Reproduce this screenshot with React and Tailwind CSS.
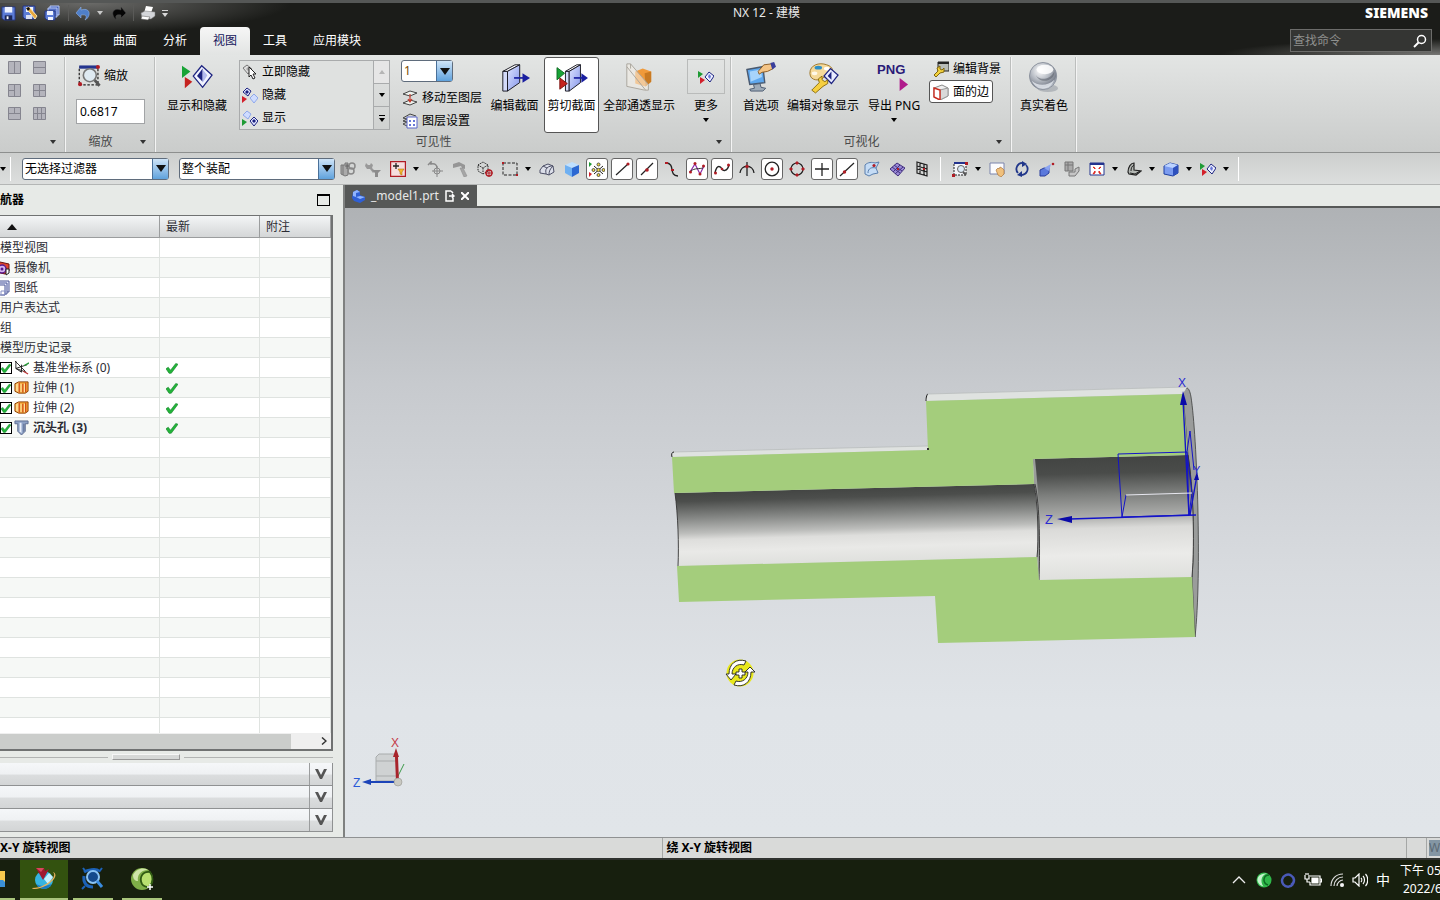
import { useState } from 'react';
import clsx from 'clsx';

const tabs = ['主页', '曲线', '曲面', '分析', '视图', '工具', '应用模块'];

const treeRows = [
  { id: 1, name: '模型视图' },
  { id: 2, name: '摄像机', icon: 'camera' },
  { id: 3, name: '图纸', icon: 'sheets' },
  { id: 4, name: '用户表达式' },
  { id: 5, name: '组' },
  { id: 6, name: '模型历史记录' },
  { id: 7, name: '基准坐标系 (0)', icon: 'csys', check: true },
  { id: 8, name: '拉伸 (1)', icon: 'extrude', check: true },
  { id: 9, name: '拉伸 (2)', icon: 'extrude', check: true },
  { id: 10, name: '沉头孔 (3)', icon: 'hole', check: true, bold: true },
];

const EMPTY_ROWS = 15;

const selectionTools = [
  { id: 'assembly', label: '装配范围' },
  { id: 'filterReset', label: '重置过滤器' },
  { id: 'snapFilter', label: '常规选择', menu: true },
  { id: 'undoSelect', label: '取消选择' },
  { id: 'hammer', label: '优先级' },
  { id: 'dottedCube', label: '取消全选' },
  { id: 'marquee', label: '矩形选择', menu: true },
  { id: 'wireBody', label: '高亮显示' },
  { id: 'blueCube', label: '允许选择隐藏线框' },
  { id: 'snapAll', label: '启用捕捉点', on: true },
  { id: 'endPoint', label: '端点', on: true },
  { id: 'midPoint', label: '中点', on: true },
  { id: 'controlPoint', label: '控制点' },
  { id: 'polePoint', label: '极点', on: true },
  { id: 'splinePoint', label: '定义点', on: true },
  { id: 'crossPoint', label: '交点' },
  { id: 'centerPoint', label: '圆弧中心', on: true },
  { id: 'quadrant', label: '象限点' },
  { id: 'plus', label: '现有点', on: true },
  { id: 'onCurve', label: '曲线上的点', on: true },
  { id: 'onFace', label: '面上的点' },
  { id: 'netFace', label: '小平面顶点' },
  { id: 'grid', label: '有界栅格' },
];

const viewTools = [
  { id: 'zoomFit', label: '缩放窗口', menu: true },
  { id: 'pan', label: '平移' },
  { id: 'rotate', label: '旋转' },
  { id: 'perspective', label: '透视' },
  { id: 'restore', label: '恢复' },
  { id: 'layout', label: '布局', menu: true },
  { id: 'orient', label: '定向视图', menu: true },
  { id: 'shaded', label: '着色', menu: true },
  { id: 'showHide', label: '显示和隐藏', menu: true },
];

const RED = '#b01c24';
const NAVY = '#1d2380';

// 16 x 16 drawings
const smallIcons = {
  save: (
    <>
      <path d="M1 1h14v14H3l-2-2z" fill="#5c7cd6" stroke="#26357c" />
      <path d="M4 1h8v6H4z" fill="#eef3ff" />
      <path d="M4 10h8v5H4z" fill="#1c2757" />
      <path d="M6 11h2v3H6z" fill="#fff" />
    </>
  ),
  saveAs: (
    <>
      <path d="M1 1h12v13H3l-2-2z" fill="#5c7cd6" stroke="#26357c" />
      <path d="M4 2h7v5H4z" fill="#eef3ff" />
      <path d="M4 10h6v4H4z" fill="#d9e0f5" />
      <path d="M4 3l3-1 8 9-2 3z" fill="#e7a73c" stroke="#fbe6b2" />
      <path d="M4 3l3-1 1 2-2 2z" fill="#111" />
    </>
  ),
  saveAll: (
    <>
      <path d="M6 1h9v9H6z" fill="#4663b8" stroke="#b9c9f6" />
      <path d="M4 3h9v9H4z" fill="#5672c8" stroke="#b9c9f6" />
      <path d="M1 6h10v9H3l-2-2z" fill="#5c7cd6" stroke="#26357c" />
      <path d="M3 6h6v4H3zM4 12h5v3H4z" fill="#eef3ff" />
    </>
  ),
  undo: (
    <path d="M1 8l5-6v3c6-2 9 1 8 5-.5 2-2 4-4 5 2-3 2-6-4-5v3z" fill="#4f7fc9" stroke="#9cbcec" strokeWidth=".5" />
  ),
  redo: (
    <path d="M15 8l-5-6v3C4 3 1 6 2 10c.5 2 2 4 4 5-2-3-2-6 4-5v3z" fill="#050505" stroke="#4a4a4a" strokeWidth=".5" />
  ),
  print: (
    <>
      <path d="M6 1l7 1-2 6H4z" fill="#fff" />
      <path d="M1 8l4-2 10 1v4l-4 3-9-1z" fill="#d4d6da" stroke="#777" strokeWidth=".5" />
      <path d="M2 11l8 1-2 3-7-1z" fill="#fff" stroke="#555" strokeWidth=".5" />
    </>
  ),
  camera: (
    <>
      <path d="M1 6l5-4 9 2v7l-4 3-9-2z" fill="#e2452c" stroke="#6b1410" />
      <circle cx="8" cy="9" r="4" fill="#d6b6ee" stroke="#5b1c8f" strokeWidth="1.5" />
      <circle cx="8" cy="9" r="1.5" fill="#5b1c8f" />
      <path d="M12 9h3v4l-3 2z" fill="#fff" stroke="#222" />
    </>
  ),
  sheets: (
    <>
      <path d="M4 1h11v11H4z" fill="#e9ecff" stroke="#4b5694" />
      <path d="M2 3h11v11H2z" fill="#e9ecff" stroke="#4b5694" />
      <path d="M0 5h11v10H0z" fill="#fff" stroke="#4b5694" />
      <path d="M7 11h4v4H7z" fill="none" stroke="#8790c4" />
    </>
  ),
  csys: (
    <>
      <path d="M2 1v8l11 4M2 9l12-4M1 1l11 11M2 9l6 4V5" fill="none" stroke="#222" />
      <path d="M10 12l5 3" stroke="#b33" strokeWidth="1.2" />
      <path d="M11 6l5-3" stroke="#2a9a3a" strokeWidth="1.5" />
    </>
  ),
  extrude: (
    <>
      <path d="M1 4l4-2 10 0 0 10-3 2H5l-4-2z" fill="#f7a836" stroke="#8a3c00" strokeLinejoin="round" />
      <path d="M2 4.500l3-1.500v10l-3-1.500z" fill="#ffd98c" />
      <path d="M5.500 3v10M9.500 4v9M12.500 3v10" stroke="#c22d10" />
      <path d="M7 4h1v9H7zM10.500 4h1v9h-1z" fill="#fff0b8" />
    </>
  ),
  hole: (
    <>
      <path d="M1 1h14v3h-3v8l-4 4-4-4V4H1z" fill="#8ea2c6" stroke="#5b6a8e" />
      <path d="M6 3h2v11l-2-2z" fill="#eaf0fb" />
      <path d="M10 4h1v8l-1 1z" fill="#5b6a8e" />
    </>
  ),
  tick: (
    <path d="M0 9l3-2 3 4 7-9 3 1L7 15H4z" fill="#22b53a" stroke="#128026" strokeWidth=".8" />
  ),
  hideNow: (
    <>
      <path d="M1 4l4-3 5 4-4 5z" fill="#dedede" stroke="#777" />
      <path d="M4 5l2-2 2 2-2 2z" fill="#aaa" />
      <path d="M7 3v10l2-2 2 4 2-1-2-4h3z" fill="#fff" stroke="#222" />
    </>
  ),
  hide: (
    <>
      <path d="M1 5l4-4 4 3-3 5z" fill="#dfe3ff" stroke={NAVY} />
      <path d="M3 5l2-2 2 2-2 2z" fill={NAVY} />
      <path d="M8 11l4-4 4 4-4 5z" fill="#cfdcff" stroke="#8fa8ea" />
      <path d="M0 9l5 3-5 4z" fill="#d3202b" />
    </>
  ),
  show: (
    <>
      <path d="M1 5l4-4 4 3-3 5z" fill="#cfdcff" stroke="#8fa8ea" />
      <path d="M8 11l4-4 4 4-4 5z" fill="#dfe3ff" stroke={NAVY} />
      <path d="M10 11l2-2 2 2-2 2z" fill={NAVY} />
      <path d="M0 9l5 3-5 4z" fill="#1e9b34" />
    </>
  ),
  moveLayer: (
    <>
      <path d="M1 4l7-3 7 2-7 3zM1 13l7-3 7 2-7 3z" fill="#eef3ee" stroke="#444" />
      <path d="M8 4v8M6 9l2 3 2-3" fill="none" stroke="#c43a2c" strokeWidth="1.2" />
    </>
  ),
  layerSet: (
    <>
      <path d="M5 6L1 5l7-4 6 2M5 9L1 8l4-2M5 13l-4-2 4-2" fill="none" stroke="#444" />
      <path d="M5 4h10v11H5z" fill="#fff" stroke="#5a66c8" />
      <path d="M7 7h2v2H7zM7 11h2v2H7zM11 7h2v2h-2zM11 11h2v2h-2z" fill="#6a78d8" />
    </>
  ),
  editBg: (
    <>
      <path d="M5 1h11v9H5z" fill="#b8bcb8" stroke="#222" />
      <path d="M5 1h11v2H5z" fill="#222" />
      <path d="M1 14l4-4-1-3 3-2v3l2 1 2-2v4l-4 1-4 4z" fill="#f3d13c" stroke="#7d6510" />
    </>
  ),
  faceEdge: (
    <>
      <path d="M1 4l8-3 6 3v8l-8 4-6-3z" fill="#eee" stroke="#888" />
      <path d="M7 6l8-2v8l-8 4z" fill="#d9d9d9" stroke="#999" />
      <path d="M1 4l6 2v10l-6-3z" fill="#fff" stroke="#c92a1e" strokeWidth="1.4" />
    </>
  ),
  assembly: (
    <>
      <path d="M1 4h4V2h3v12l-3 1-4-2zM3 4v10" fill="#aaa" stroke="#777" />
      <circle cx="12" cy="5" r="3" fill="none" stroke="#888" strokeWidth="1.5" />
      <circle cx="11" cy="10" r="3" fill="none" stroke="#888" strokeWidth="1.5" />
      <path d="M5 5h4M7 3v5" stroke="#666" />
    </>
  ),
  filterReset: (
    <>
      <path d="M1 2l2 2h2l1-2 2 2-1 3 3 3-2 2-3-4H2L0 5z" fill="#999" />
      <path d="M7 9h9l-3 3v4h-3v-4z" fill="#8c8c8c" />
    </>
  ),
  snapFilter: (
    <>
      <path d="M.5.5h15v15H.5z" fill="#f6dede" stroke={RED} strokeWidth="1.4" />
      <path d="M3 5h6M6 2v6" stroke="#222" strokeWidth="1.3" />
      <path d="M8 8h6l-2 3v3l-2-1v-2z" fill="#f5b92e" stroke="#a26a00" strokeWidth=".5" />
    </>
  ),
  undoSelect: (
    <>
      <path d="M1 4l3-3v2c4-1 6 1 6 4" fill="none" stroke="#888" strokeWidth="1.5" />
      <circle cx="10" cy="10" r="3" fill="none" stroke="#888" />
      <path d="M10 5v11M5 10h11" stroke="#888" />
    </>
  ),
  hammer: (
    <>
      <path d="M1 3l6-2 6 3v4l-3-1-1-2-8 2z" fill="#969696" />
      <path d="M8 7l3 0 4 8-3 1z" fill="#a6a6a6" stroke="#888" strokeWidth=".5" />
    </>
  ),
  dottedCube: (
    <>
      <path d="M1 4l5-3 5 3v6l-5 3-5-3zM1 4l5 3 5-3M6 7v6" fill="none" stroke="#222" strokeDasharray="1.5 1" />
      <circle cx="12" cy="12" r="3" fill="none" stroke={RED} strokeWidth="1.3" />
      <path d="M12 8v8M8 12h8" stroke={RED} />
    </>
  ),
  marquee: (
    <>
      <path d="M1 2h14v12H1z" fill="none" stroke="#222" strokeDasharray="3 1.5" />
      <path d="M0 1h2v2H0zM14 13h2v2h-2z" fill={RED} />
    </>
  ),
  wireBody: (
    <>
      <path d="M1 9l3-4 5-2 5 2 1 6-5 3-3-1-6-1z" fill="#dcdfe9" stroke="#4c4f66" />
      <path d="M4 5l4 2c2-2 4-2 6-2M8 7c-2 2-1 4-1 6M10 14c0-4 1-6 4-9" fill="none" stroke="#4c4f66" />
    </>
  ),
  blueCube: (
    <>
      <path d="M1 4l7-3 7 3-7 3z" fill="#bfe0ff" />
      <path d="M1 4l7 3v9l-7-4z" fill="#6fb0f2" />
      <path d="M15 4L8 7v9l7-4z" fill="#2c68d2" />
    </>
  ),
  snapAll: (
    <>
      <path d="M0 1l3 2-3 3z" fill="#1e9b34" />
      <path d="M0 11l3 2-3 3z" fill="#d3202b" />
      <path d="M5 5l9 8M14 5l-9 8" stroke="#222" />
      <g fill="#f0d94a" stroke="#333" strokeWidth=".8">
        <circle cx="9.500" cy="9" r="1.700" />
        <circle cx="9.500" cy="3.500" r="1.500" />
        <circle cx="9.500" cy="14" r="1.500" />
        <circle cx="4.500" cy="9" r="1.500" />
        <circle cx="14.500" cy="9" r="1.500" />
      </g>
    </>
  ),
  endPoint: (
    <>
      <path d="M2 14L14 3" stroke="#222" strokeWidth="1.2" />
      <circle cx="14" cy="3" r="1.6" fill={RED} />
    </>
  ),
  midPoint: (
    <>
      <path d="M2 14L14 2" stroke="#222" strokeWidth="1.2" />
      <circle cx="8" cy="9" r="1.8" fill={RED} />
    </>
  ),
  controlPoint: (
    <>
      <path d="M2 2c10 0 2 13 12 13" fill="none" stroke="#222" strokeWidth="1.4" />
      <path d="M1 1h3v2H1zM7 8h3v2H7z" fill={RED} />
    </>
  ),
  polePoint: (
    <>
      <path d="M1 11L6 3l5 10 4-8" fill="none" stroke="#8a2aa8" strokeWidth="1.2" />
      <path d="M2 10c3-3 9-2 12-3" fill="none" stroke="#333" />
      <circle cx="1.500" cy="11" r="1.500" fill={RED} />
      <circle cx="6" cy="2.500" r="1.500" fill={RED} />
      <circle cx="11" cy="13" r="1.500" fill={RED} />
      <circle cx="14.500" cy="5" r="1.500" fill={RED} />
    </>
  ),
  splinePoint: (
    <>
      <path d="M1 12C3 2 7 6 8 8s5 3 7-4" fill="none" stroke="#222" strokeWidth="1.4" />
      <circle cx="1.500" cy="12" r="1.500" fill={RED} />
      <circle cx="8" cy="8" r="1.300" fill={RED} />
      <circle cx="14.500" cy="4" r="1.500" fill={RED} />
    </>
  ),
  crossPoint: (
    <>
      <path d="M8 1v14M1 12c1-9 13-9 14 0" fill="none" stroke="#222" strokeWidth="1.3" />
      <circle cx="8" cy="5.500" r="1.700" fill={RED} />
    </>
  ),
  centerPoint: (
    <>
      <circle cx="8" cy="8" r="6.800" fill="none" stroke="#222" strokeWidth="1.3" />
      <circle cx="8" cy="8" r="1.700" fill={RED} />
    </>
  ),
  quadrant: (
    <>
      <circle cx="8" cy="8" r="6" fill="none" stroke="#222" strokeWidth="1.2" />
      <path d="M8 0l2 2-2 2-2-2zM8 12l2 2-2 2-2-2zM2 6l2 2-2 2-2-2zM14 6l2 2-2 2-2-2z" fill={RED} />
    </>
  ),
  plus: <path d="M8 2v13M1 8h14" stroke="#222" strokeWidth="1.3" />,
  onCurve: (
    <>
      <path d="M1 15L15 2" stroke="#222" strokeWidth="1.2" />
      <circle cx="5.500" cy="11" r="1.700" fill={RED} />
    </>
  ),
  onFace: (
    <>
      <path d="M1 4c3-3 7-3 10-2l4-1-3 6 2 5-5 1-4 2-4-2z" fill="#c5dcf5" stroke="#5a7fae" />
      <path d="M4 12c0-5 4-6 8-5" fill="none" stroke="#5a7fae" />
      <circle cx="10" cy="4.500" r="1.600" fill={RED} />
    </>
  ),
  netFace: (
    <>
      <path d="M1 8l7-6 8 5-7 8z" fill="#9a8ad6" stroke="#42307e" />
      <path d="M3 6l8 6M5 4l8 6M4 11l7-7M6 13l8-7" stroke="#42307e" />
      <path d="M8 7h2v2H8z" fill={RED} />
    </>
  ),
  grid: (
    <>
      <path d="M3 1l10 3v11L3 12zM3 5l10 3M3 8l10 3M6 2v11M10 3v11" fill="none" stroke="#222" strokeWidth="1.2" />
      <path d="M9 7h2v2H9z" fill={RED} />
    </>
  ),
  zoomFit: (
    <>
      <path d="M2 2h12v12H2z" fill="#f4f6fa" stroke="#222" strokeDasharray="2 1" />
      <path d="M2 1h12v2H2z" fill="#24348e" />
      <circle cx="9" cy="8" r="3.500" fill="#dceaf5" stroke="#666" />
      <path d="M11 11l3 3" stroke="#555" strokeWidth="2" />
      <path d="M0 13h3v3H0zM13 1h3v3h-3z" fill={RED} />
    </>
  ),
  pan: (
    <>
      <path d="M1 2h14v11H1z" fill="#fbfbfd" stroke="#7a84ac" />
      <path d="M7 9l2-2 1 1 1-2 2 1 2 2v4l-3 3-3-2z" fill="#f0c07c" stroke="#a4692c" strokeWidth=".6" />
    </>
  ),
  rotate: (
    <>
      <path d="M4 12A6 6 0 0 1 9 2M12 4a6 6 0 0 1-5 10" fill="none" stroke="#21378a" strokeWidth="1.800" />
      <path d="M8 0l5 3-5 3zM8 10l-5 4 5 2z" fill="#21378a" />
    </>
  ),
  perspective: (
    <>
      <path d="M1 9l4-2h5v5l-4 3H1z" fill="#5b79dc" stroke="#2a3f9c" />
      <path d="M5 7l7-4-2 7" fill="#8ba4f0" />
      <circle cx="14" cy="3" r="1.300" fill={RED} />
    </>
  ),
  restore: (
    <>
      <path d="M1 1h8v9H1zM1 4h8M4 1v9" fill="#aaa" stroke="#777" />
      <path d="M5 11h6V8l4-2v4l-4 5H5z" fill="#c5c5c5" stroke="#777" />
    </>
  ),
  layout: (
    <>
      <path d="M1 2h14v12H1z" fill="#fff" stroke="#24348e" />
      <path d="M1 2h14v2H1z" fill="#24348e" />
      <path d="M4 6l2 1v1zM12 6l-2 1v1zM4 13l2-1v-2zM12 13l-2-1v-2z" fill="#e02a20" stroke="#e02a20" />
    </>
  ),
  orient: (
    <>
      <path d="M2 11c0-5 3-9 6-9v7l7 1-5 4-7-1z" fill="#b4b8b4" stroke="#222" strokeWidth="1.2" />
      <path d="M5 10c0-3 1-5 3-6M4 12l5 1 5-3" fill="none" stroke="#222" />
    </>
  ),
  shaded: (
    <>
      <path d="M1 5l6-3 8 2v8l-5 3-9-2z" fill="#7c9cf0" stroke="#1e3fa0" strokeLinejoin="round" />
      <path d="M1 5l6-3 8 2-5 3z" fill="#bcd3ff" />
      <path d="M10 7l5-3v8l-5 3z" fill="#2e50bd" />
    </>
  ),
  showHide: (
    <>
      <path d="M0 2l5 3-5 4z" fill="#1e9b34" />
      <path d="M2 8l5 3-5 4z" fill="#d3202b" />
      <path d="M7 8l4-5 5 4-4 6z" fill="#eef1ff" stroke={NAVY} />
      <path d="M10 8l1-3 2 2-1 3z" fill="#6a78d8" />
    </>
  ),
};

// 32 x 32 drawings
const largeIcons = {
  showHide: (
    <>
      <path d="M0 4l9 6-9 7z" fill="#18a336" />
      <path d="M3 16l8 5-8 7z" fill="#c5221f" />
      <path d="M12 15l9-11 11 10-10 13z" fill="#f2f4ff" stroke={NAVY} strokeWidth="1.400" />
      <path d="M16 15l6-8v14z" fill={NAVY} />
      <path d="M22 8l5 6-5 8z" fill="#b4bbf0" />
    </>
  ),
  zoom: (
    <>
      <path d="M4 5h23v22H4z" fill="none" stroke="#222" strokeDasharray="3 2" strokeWidth="1.500" />
      <path d="M4 3h23v4H4z" fill="#24348e" />
      <circle cx="17" cy="15" r="8" fill="#dfeaf2" stroke="#777" strokeWidth="2" />
      <path d="M23 21l6 7" stroke="#555" strokeWidth="3.500" />
      <circle cx="5" cy="26" r="2.500" fill={RED} />
      <circle cx="27" cy="5" r="2.500" fill={RED} />
    </>
  ),
  editSection: (
    <>
      <defs>
        <linearGradient id="slab" x1="0" y1="0" x2="1" y2="1">
          <stop offset="0" stopColor="#dfe5ff" />
          <stop offset="1" stopColor="#8596ea" />
        </linearGradient>
      </defs>
      <path d="M3 10L16 3h5L8 10z" fill="#fff" stroke="#15151f" />
      <path d="M3 10h5v21H3z" fill="#d3dafa" stroke="#15151f" />
      <path d="M8 10l13-7v19L8 31z" fill="url(#slab)" stroke="#15151f" />
      <path d="M15 17h10" stroke="#1a1fa0" strokeWidth="1.800" />
      <path d="M24 12l8 5-8 5z" fill="#1a1fa0" />
    </>
  ),
  clipSection: (
    <>
      <path d="M9 10l12-7h4l-12 7z" fill="#fff" stroke="#15151f" />
      <path d="M9 10h4v21H9z" fill="#d3dafa" stroke="#15151f" />
      <path d="M13 10l12-7v19l-12 9z" fill="url(#slab)" stroke="#15151f" />
      <path d="M0 6l8 6-8 7z" fill="#18a336" stroke="#0b6b20" />
      <path d="M3 17l8 6-8 6z" fill="#c5221f" stroke="#7d1412" />
      <path d="M18 17h9" stroke="#1a1fa0" strokeWidth="1.800" />
      <path d="M26 12l7 5-7 5z" fill="#1a1fa0" />
    </>
  ),
  translucent: (
    <>
      <path d="M12 10l8-3 9 3v11l-6 5-11-3z" fill="#f09a3a" />
      <path d="M22 12l7-2v11l-6 5z" fill="#c97a22" />
      <path d="M3 2l4 0 19 22v6l-4 0L3 26z" fill="#f4efe6" fillOpacity=".55" stroke="#a9a49c" />
      <path d="M3 5l20 25M7 2v5" stroke="#a9a49c" fill="none" />
    </>
  ),
  preferences: (
    <>
      <path d="M1 8l17-3 2 17-16 2z" fill="#5fa8ee" stroke="#4a5a70" strokeWidth="1.500" />
      <path d="M4 10l12-2 1 8-12 5z" fill="#a7d4fb" />
      <path d="M8 24l7-1 1 4 5 1-3 3H5l-1-2 5-1z" fill="#9eabb8" stroke="#4a5a70" />
      <path d="M13 10l6-7 8-1 2 5-6 3-6 1-3 2z" fill="#f4c486" stroke="#8a5a22" />
      <path d="M26 1l4-1 2 5-4 3z" fill="#3a3f9c" />
    </>
  ),
  editDisplay: (
    <>
      <path d="M2 12C2 3 12 0 20 3c7 2 8 8 5 12-3 3-6-1-9 2-2 3-14 4-14-5z" fill="#f5d99a" stroke="#9c7428" />
      <ellipse cx="11" cy="6" rx="4" ry="2" fill="#2e8fc7" />
      <ellipse cx="20" cy="7" rx="3" ry="2" fill="#fff" />
      <ellipse cx="7" cy="12" rx="3" ry="2" fill="#fff8e8" />
      <path d="M17 15l7-8 8 7-7 9z" fill="#e8ebff" stroke={NAVY} strokeWidth="1.400" />
      <path d="M21 15l4-5v9z" fill={NAVY} />
      <path d="M4 30l8-8-1-4 4-3v4l3 2 3-2v4l-5 3-8 7z" fill="#f6cf3f" stroke="#8a6d10" />
    </>
  ),
  exportPng: (
    <>
      <text x="13" y="13" textAnchor="middle" fontSize="14" fontWeight="700" fontFamily="Liberation Sans, sans-serif" fill="#2a1a78">
        PNG
      </text>
      <path d="M22 17l9 7-9 7z" fill="#b01c8c" />
    </>
  ),
  sphere: (
    <>
      <defs>
        <radialGradient id="chrome" cx=".4" cy=".3" r=".75">
          <stop offset="0" stopColor="#ffffff" />
          <stop offset=".45" stopColor="#b9bec6" />
          <stop offset=".8" stopColor="#7c828e" />
          <stop offset="1" stopColor="#dfe4ec" />
        </radialGradient>
      </defs>
      <ellipse cx="20" cy="28" rx="11" ry="4" fill="#8b929c" opacity=".5" />
      <circle cx="15" cy="15" r="14.500" fill="url(#chrome)" stroke="#8a909c" />
      <path d="M7 13c2 6 14 8 20-3 1 10-16 15-20 3z" fill="#5f646e" opacity=".6" />
      <ellipse cx="17" cy="8" rx="9" ry="5" fill="#fff" opacity=".85" />
      <path d="M3 20c6 6 17 6 24-1-4 12-19 13-24 1z" fill="#eef2f8" opacity=".75" />
    </>
  ),
};

function Icon({ name, className = 'size-4' }) {
  return (
    <svg viewBox="0 0 16 16" className={clsx('shrink-0', className)} aria-hidden="true">
      {smallIcons[name]}
    </svg>
  );
}

function BigIcon({ name, className = 'size-8' }) {
  return (
    <svg viewBox="0 0 32 32" className={clsx('shrink-0 overflow-visible', className)} aria-hidden="true">
      {largeIcons[name]}
    </svg>
  );
}

function Caret({ className = 'text-black' }) {
  return (
    <svg viewBox="0 0 6 4" className={clsx('h-1 w-1.5 shrink-0', className)} aria-hidden="true">
      <path d="M0 0h6L3 4z" fill="currentColor" />
    </svg>
  );
}

function Dropdown({ label, value, className }) {
  return (
    <div className={clsx('relative shrink-0', className)}>
      <select
        aria-label={label}
        className="block h-[22px] w-full appearance-none rounded-[3px] border border-[#5f6c7c] bg-white pl-0.5 text-xs outline-none"
      >
        <option>{value}</option>
      </select>
      <span className="pointer-events-none absolute inset-y-px right-px flex w-4 items-center justify-center border-l border-[#4a7099] bg-gradient-to-b from-[#cfe4f7] to-[#5fa2dc]">
        <svg viewBox="0 0 10 7" className="h-[7px] w-2.5" aria-hidden="true">
          <path d="M0 0h10L5 7z" fill="#111" />
        </svg>
      </span>
    </div>
  );
}

function TitleBar() {
  return (
    <div className="flex h-5 items-center">
      <div className="flex items-center gap-1.5 pl-px">
        <button aria-label="保存"><Icon name="save" className="block size-[15px]" /></button>
        <button aria-label="另存为"><Icon name="saveAs" className="block size-4" /></button>
        <button aria-label="全部保存"><Icon name="saveAll" className="block size-4" /></button>
        <span className="ml-0.5 h-4 w-px bg-[#5a5a58]" />
        <button aria-label="撤销"><Icon name="undo" className="block size-4" /></button>
        <button aria-label="撤销列表" className="flex h-4 w-2 items-center"><Caret className="text-[#c8c8c8]" /></button>
        <button aria-label="重做"><Icon name="redo" className="block size-4" /></button>
        <span className="h-4 w-px bg-[#5a5a58]" />
        <button aria-label="打印"><Icon name="print" className="block size-4" /></button>
        <button aria-label="自定义" className="flex flex-col items-center gap-0.5">
          <span className="h-px w-1.5 bg-[#d8d8d8]" />
          <Caret className="text-[#d8d8d8]" />
        </button>
      </div>
      <h1 className="flex-1 text-center text-xs text-[#e8e8e8]">NX 12 - 建模</h1>
      <span className="pr-3 text-sm font-black text-white">SIEMENS</span>
    </div>
  );
}

function TabBar() {
  const [active, setActive] = useState('视图');
  return (
    <div className="mt-1 flex h-7 items-start justify-between">
      <nav className="flex h-full">
        {tabs.map(t => (
          <button
            key={t}
            onClick={() => setActive(t)}
            className={clsx(
              'h-full px-[13px] text-xs',
              active === t ? 'rounded-t bg-gradient-to-b from-[#f6f6f6] to-[#e2e4e3] text-[#14145a]' : 'text-white'
            )}
          >
            {t}
          </button>
        ))}
      </nav>
      <div className="mr-2 mt-0.5 flex h-[23px] w-[142px] items-center border border-[#6c6c6a] bg-[#343533] px-0.5">
        <input
          aria-label="查找命令"
          placeholder="查找命令"
          className="w-full min-w-0 bg-transparent text-xs text-white outline-none placeholder:text-[#8f908e]"
        />
        <svg viewBox="0 0 14 14" className="mr-0.5 size-3.5 shrink-0" fill="none" stroke="#fff" aria-hidden="true">
          <circle cx="8.500" cy="5.500" r="4" strokeWidth="1.500" />
          <path d="M5.500 8.500L1 13" strokeWidth="2" />
        </svg>
      </div>
    </div>
  );
}

function Group({ title, className, children }) {
  return (
    <section className={clsx('flex shrink-0 flex-col border-r border-[#f4f4f4] shadow-[inset_-1px_0_0_#bcbebd]', className)}>
      <div className="flex h-[76px] items-start">{children}</div>
      {title !== undefined && (
        <div className="flex h-[18px] items-center gap-1 pr-2">
          <span className="flex-1 text-center text-xs text-[#4a4a4a]">{title}</span>
          <button aria-label={`${title}选项`} className="flex h-4 w-2 items-center justify-center">
            <Caret className="text-[#333]" />
          </button>
        </div>
      )}
    </section>
  );
}

function BigButton({ icon, label, menu, on, className }) {
  return (
    <button
      className={clsx(
        'flex h-[76px] shrink-0 flex-col items-center border pt-1 text-xs whitespace-nowrap text-black',
        on ? 'rounded-[3px] border-[#555] bg-white' : 'border-transparent',
        className
      )}
    >
      <BigIcon name={icon} className="size-[30px]" />
      <span className="mt-1 leading-5">{label}</span>
      {menu && <Caret className="mt-0.5 text-black" />}
    </button>
  );
}

function SmallButton({ icon, label, on }) {
  return (
    <button
      className={clsx(
        'flex h-[23px] items-center gap-1 border px-[3px] text-xs whitespace-nowrap text-black',
        on ? 'rounded-[3px] border-[#555] bg-white' : 'border-transparent'
      )}
    >
      <Icon name={icon} />
      {label}
    </button>
  );
}

function LayoutGlyph({ d }) {
  return (
    <button aria-label="布局" className="size-[13px]">
      <svg viewBox="0 0 13 13" className="size-[13px]" aria-hidden="true">
        <path d={`M.5.5h12v12H.5z ${d}`} fill="#b4b4bc" stroke="#85858f" />
      </svg>
    </button>
  );
}

function Ribbon() {
  return (
    <div className="flex h-[98px] overflow-hidden border-b border-[#8d8f8e] bg-gradient-to-b from-[#e3e5e4] to-[#cacccb] pt-0.5">
      <Group title="" className="w-[66px]">
        <div className="grid grid-cols-2 gap-x-3 gap-y-2.5 pt-1 pl-2">
          <LayoutGlyph d="M6.500 0v13" />
          <LayoutGlyph d="M0 6.500h13" />
          <LayoutGlyph d="M6.500 0v13M0 6.500h6" />
          <LayoutGlyph d="M6.500 0v13M0 6.500h13" />
          <LayoutGlyph d="M0 6.500h13M6.500 0v6" />
          <LayoutGlyph d="M4.500 0v13M8.500 0v13M0 6.500h13" />
        </div>
      </Group>

      <Group title="缩放" className="w-[90px]">
        <div className="flex flex-col gap-1.5 pt-1.5 pl-2.5">
          <button className="flex items-center gap-0.5 text-xs text-black">
            <BigIcon name="zoom" className="size-[26px]" />
            缩放
          </button>
          <input
            aria-label="缩放比例"
            defaultValue="0.6817"
            className="mt-1 h-[25px] w-[69px] border border-[#a2a4a6] bg-white pl-[3px] text-xs text-black outline-none"
          />
        </div>
      </Group>

      <Group title="可见性" className="w-[576px]">
        <BigButton icon="showHide" label="显示和隐藏" className="ml-1 w-[74px]" />
        <div className="mt-[3px] ml-[5px] flex h-[70px] w-[151px] border border-[#a9abac]">
          <div className="flex flex-1 flex-col bg-[#dfe1e0]">
            {[['hideNow', '立即隐藏'], ['hide', '隐藏'], ['show', '显示']].map(([icon, label]) => (
              <button key={label} className="flex h-[23px] items-center gap-1 pl-0.5 text-xs text-black">
                <Icon name={icon} />
                {label}
              </button>
            ))}
          </div>
          <div className="flex w-4 flex-col divide-y divide-[#a9abac] border-l border-[#a9abac]">
            <button aria-label="向上" disabled className="flex flex-1 items-center justify-center bg-[#e6e6e6]">
              <Caret className="rotate-180 text-[#b5b5b5]" />
            </button>
            <button aria-label="向下" className="flex flex-1 items-center justify-center"><Caret /></button>
            <button aria-label="展开" className="flex flex-1 flex-col items-center justify-center gap-0.5">
              <span className="h-px w-1.5 bg-black" />
              <Caret />
            </button>
          </div>
        </div>
        <div className="flex flex-col items-start pt-[3px] pl-2">
          <div className="ml-[3px]">
            <Dropdown label="工作图层" value="1" className="mb-1 w-[52px] text-[#7a4a00]" />
          </div>
          <SmallButton icon="moveLayer" label="移动至图层" />
          <SmallButton icon="layerSet" label="图层设置" />
        </div>
        <BigButton icon="editSection" label="编辑截面" className="ml-px w-[55px]" />
        <BigButton icon="clipSection" label="剪切截面" on className="ml-0.5 w-[55px]" />
        <BigButton icon="translucent" label="全部通透显示" className="ml-0.5 w-[76px]" />
        <button className="ml-2.5 flex h-[76px] w-[38px] flex-col items-center pt-0.5 text-xs text-black">
          <span className="flex h-[35px] w-[38px] items-center justify-center border border-[#b9bbba]">
            <Icon name="showHide" />
          </span>
          <span className="mt-0.5 leading-5">更多</span>
          <Caret className="mt-0.5" />
        </button>
      </Group>

      <Group title="可视化" className="w-[280px]">
        <BigButton icon="preferences" label="首选项" className="ml-2 w-[42px]" />
        <BigButton icon="editDisplay" label="编辑对象显示" className="ml-[3px] w-[76px]" />
        <BigButton icon="exportPng" label="导出 PNG" menu className="ml-0.5 w-[62px]" />
        <div className="flex flex-col items-start pl-1">
          <SmallButton icon="editBg" label="编辑背景" />
          <SmallButton icon="faceEdge" label="面的边" on />
        </div>
      </Group>

      <Group className="w-[65px]">
        <BigButton icon="sphere" label="真实着色" className="ml-1 w-[56px]" />
      </Group>
    </div>
  );
}

function Tool({ tool }) {
  return (
    <>
      <button
        aria-label={tool.label}
        className="flex w-[25px] shrink-0 items-center justify-center"
      >
        <span
          className={clsx(
            'flex size-[22px] items-center justify-center border',
            tool.on ? 'rounded-[3px] border-[#666] bg-white' : 'border-transparent'
          )}
        >
          <Icon name={tool.id} />
        </span>
      </button>
      {tool.menu && (
        <button aria-label={`${tool.label}菜单`} className="flex w-3 shrink-0 items-center justify-center">
          <Caret />
        </button>
      )}
    </>
  );
}

function SelectionBar() {
  return (
    <div className="flex h-8 items-center overflow-hidden border-b border-[#b4b6b5] bg-gradient-to-b from-[#cdcfce] to-[#dcdedd] text-black">
      <div className="flex w-2.5 shrink-0"><Caret /></div>
      <span className="mr-[11px] h-6 w-px shrink-0 bg-white" />
      <Dropdown label="类型过滤器" value="无选择过滤器" className="w-[147px]" />
      <Dropdown label="选择范围" value="整个装配" className="ml-2.5 w-[156px]" />
      <div className="flex">
        {selectionTools.map(tool => <Tool key={tool.id} tool={tool} />)}
      </div>
      <span className="mx-1.5 h-6 w-px shrink-0 bg-white" />
      <div className="flex">
        {viewTools.map(tool => <Tool key={tool.id} tool={tool} />)}
      </div>
      <span className="mx-1.5 h-6 w-px shrink-0 bg-white" />
    </div>
  );
}

function NameCell({ row }) {
  if (!row.icon) {
    return <span>{row.name}</span>;
  }
  if (!row.check) {
    return (
      <span className="-ml-1.5 flex items-center gap-1">
        <Icon name={row.icon} />
        {row.name}
      </span>
    );
  }
  return (
    <label className="flex items-center gap-0.5">
      <span className="relative size-3 shrink-0">
        <input type="checkbox" defaultChecked className="peer block size-3 appearance-none border border-black bg-white" />
        <span className="pointer-events-none absolute inset-px hidden peer-checked:block">
          <Icon name="tick" className="block size-2.5" />
        </span>
      </span>
      <Icon name={row.icon} className="size-[15px]" />
      <span className={clsx('ml-0.5', row.bold && 'font-bold')}>{row.name}</span>
    </label>
  );
}

function PartNavigator() {
  const head = 'h-[22px] border-r border-b border-[#9b9d9e] p-0 text-left font-normal';
  const cell = 'h-5 border-r border-b border-[#dfe3e0] p-0';
  return (
    <aside className="flex w-[345px] shrink-0 flex-col border-r-2 border-[#7f8180] bg-[#e7eae7] text-xs text-[#2c2c34]">
      <div className="flex h-[30px] shrink-0 items-center justify-between pr-[13px]">
        <h2 className="font-bold text-black">航器</h2>
        <button aria-label="最大化" className="h-3 w-[13px] border border-t-2 border-black" />
      </div>
      <div className="mr-2.5 flex min-h-0 flex-1 flex-col border-t border-r-2 border-b-2 border-[#707272] bg-white">
        <div className="min-h-0 flex-1 basis-0 overflow-hidden">
          <table className="w-full table-fixed border-separate border-spacing-0 leading-4">
            <thead className="bg-gradient-to-b from-[#f3f5f6] to-[#d3d5d6]">
              <tr>
                <th className={clsx(head, 'w-[160px]')} aria-label="名称">
                  <svg viewBox="0 0 10 6" className="ml-[7px] h-1.5 w-2.5" aria-hidden="true">
                    <path d="M0 6h10L5 0z" fill="#111" />
                  </svg>
                </th>
                <th className={clsx(head, 'w-[100px]')}><span className="ml-1.5">最新</span></th>
                <th className={head}><span className="ml-1.5">附注</span></th>
              </tr>
            </thead>
            <tbody>
              {treeRows.map(row => (
                <tr key={row.id} className="even:bg-[#f6f8f6]">
                  <td className={cell}><NameCell row={row} /></td>
                  <td className={cell}>{row.check && <Icon name="tick" className="ml-1.5 block size-3" />}</td>
                  <td className={cell} />
                </tr>
              ))}
              {Array.from({ length: EMPTY_ROWS }, (_, i) => (
                <tr key={i} className="even:bg-[#f6f8f6]">
                  <td className={cell} />
                  <td className={cell} />
                  <td className={cell} />
                </tr>
              ))}
            </tbody>
          </table>
        </div>
        <div className="flex h-4 shrink-0 items-center justify-between bg-[#efefef]">
          <span className="h-[15px] w-[291px] bg-[#cbcdcb]" />
          <svg viewBox="0 0 6 8" className="mr-1 h-2 w-1.5" fill="none" stroke="#333" strokeWidth="1.500" aria-hidden="true">
            <path d="M1 .5L5 4 1 7.500" />
          </svg>
        </div>
      </div>
      <div className="mr-2.5 flex h-3 shrink-0 items-center gap-1">
        <span className="h-px w-[108px] bg-[#b2b4b3]" />
        <span className="h-1.5 w-[68px] border border-[#f6f6f6] border-r-[#999] border-b-[#999] bg-[#d6d8d7]" />
        <span className="h-px flex-1 bg-[#b2b4b3]" />
      </div>
      <div className="mr-2.5 mb-[5px] flex shrink-0 flex-col">
        {['相依性', '细节', '预览'].map(name => (
          <button
            key={name}
            aria-label={name}
            className="flex h-[23px] items-stretch justify-end border-r border-b border-[#8f9192] bg-[linear-gradient(#f5f7f9,#eff1f3_50%,#dbddde_55%,#d3d5d6)]"
          >
            <span className="flex w-[23px] items-center justify-center border-l border-[#9b9d9e]">
              <svg viewBox="0 0 12 10" className="h-2.5 w-3" aria-hidden="true">
                <path d="M0 0h3l3 6 3-6h3L7 10H5z" fill="#555" />
              </svg>
            </span>
          </button>
        ))}
      </div>
    </aside>
  );
}

function ModelView() {
  return (
    <svg
      viewBox="345 208 1095 629"
      className="size-full"
      fontFamily="Liberation Sans, sans-serif"
      role="img"
      aria-label="模型"
    >
      <defs>
        <linearGradient id="smallBore" gradientUnits="userSpaceOnUse" x1="855" y1="488" x2="857" y2="562">
          <stop offset="0" stopColor="#434543" />
          <stop offset=".12" stopColor="#4c4e4c" />
          <stop offset=".35" stopColor="#868886" />
          <stop offset=".55" stopColor="#bcbdbb" />
          <stop offset=".64" stopColor="#dededc" />
          <stop offset=".8" stopColor="#e9e9e7" />
          <stop offset="1" stopColor="#dfe0dd" />
        </linearGradient>
        <linearGradient id="largeBore" gradientUnits="userSpaceOnUse" x1="1112" y1="457" x2="1115" y2="579">
          <stop offset="0" stopColor="#434543" />
          <stop offset=".13" stopColor="#4a4c4a" />
          <stop offset=".3" stopColor="#7c7e7c" />
          <stop offset=".48" stopColor="#abacaa" />
          <stop offset=".58" stopColor="#dadad8" />
          <stop offset=".8" stopColor="#ebebe9" />
          <stop offset="1" stopColor="#dfe0dd" />
        </linearGradient>
      </defs>

      {/* Turned part, cut open */}
      <path d="M1183 394C1185 386 1189 385 1191 397C1197 435 1202 575 1195 637L1192 577C1195 540 1193 490 1188 455Z" fill="#9a9c9b" stroke="#3c3e3c" strokeWidth=".8" />
      <path d="M926 401L928 394 1187 387 1183 394Z" fill="#dfe2e0" />
      <path d="M928 394L1187 387" stroke="#b9bcbc" strokeWidth=".8" />
      <path d="M926 401C926 397 927 394 928 394" fill="none" stroke="#222" />
      <path d="M672 457L673 452 928 446 928 450Z" fill="#dfe2e0" />
      <path d="M673 452L928 446" stroke="#b9bcbc" strokeWidth=".8" />
      <path d="M672 457C671 454 672 452 674 452" fill="none" stroke="#222" />
      <path d="M675 493L1034 484C1037 500 1038 535 1037 557L678 566C679 545 678 515 675 493Z" fill="url(#smallBore)" />
      <path d="M1033 459L1188 455C1193 485 1195 540 1192 577L1039 580C1040 545 1039 500 1033 459Z" fill="url(#largeBore)" />
      <path d="M1033 459L1034 484C1037 500 1038 535 1037 557L1039 580C1041 540 1039 495 1035 459Z" fill="#9a9c9b" />
      <path d="M675 493C678 515 679 545 678 566M1034 484C1038 505 1039 540 1037 557M1035 484C1040 505 1040 550 1039 580M1188 455C1193 485 1195 540 1192 577" fill="none" stroke="#333" strokeWidth=".9" />
      <path d="M672 457L928 450 926 401 1183 394 1188 455 1033 459 1034 484 674 493Z" fill="#a4cd7c" />
      <path d="M677 566L1037 557 1039 580 1192 577 1195 637 938 643 935 596 679 602Z" fill="#a4cd7c" />
      <path d="M927 448h2v2h-2z" fill="#333" />

      {/* Datum coordinate system */}
      <g fill="none" stroke="#1414c8">
        <path d="M1189 515L1183 400M1196 515L1070 519M1190 515L1197 475" strokeWidth="1.400" />
        <path d="M1118 454L1187 452 1189 515 1122 517ZM1122 517L1126 495M1192 493L1187 452M1187 452L1190 431 1194 470M1192 493L1189 515" />
      </g>
      <path d="M1126 495L1192 493" stroke="#e8e8f0" />
      <path d="M1183 391L1180 405H1187ZM1057 519L1072 516V523ZM1197 472L1194 480H1199Z" fill="#0a0aa8" />
      <text x="1178" y="387" fontSize="12" fill="#2a2ad0">X</text>
      <text x="1193" y="474" fontSize="11" fill="#2a2ad0">Y</text>
      <text x="1045" y="524" fontSize="13" fill="#2a2ad0">Z</text>

      {/* Rotate cursor */}
      <circle cx="740" cy="673" r="13.500" fill="#e8e81c" />
      <g fill="#fff" stroke="#222" strokeWidth=".9">
        <path d="M746 661C736 658 729 664 729 674H726L731 680 736 674H732C732 667 738 663 744 665Z" />
        <path d="M734 685C744 688 751 682 751 672H755L750 667 745 672H748C748 679 742 683 736 681Z" />
        <path d="M739 669H742V672H745V675H742V678H739V675H736V672H739Z" />
      </g>

      {/* View triad */}
      <path d="M376 757L379 754H397V778L394 781H376ZM376 761H397M376 776H397" fill="#cfd2d3" stroke="#a9acad" />
      <path d="M398 776L404 764" stroke="#3c9a4a" />
      <path d="M396 781L395 757 393 757 396 748 399 757 398 757 399 781Z" fill="#a8242c" />
      <path d="M397 781H371V779L362 782 371 785V783H397Z" fill="#1c44b8" />
      <circle cx="398" cy="782" r="4" fill="#c9c9c2" stroke="#8b8b85" strokeWidth=".5" />
      <text x="391" y="747" fontSize="12" fill="#c43a48">X</text>
      <text x="353" y="787" fontSize="12" fill="#2a5ad8">Z</text>
    </svg>
  );
}

function GraphicsArea() {
  return (
    <main className="flex min-w-0 flex-1 flex-col">
      <div className="flex h-[23px] shrink-0 border-b-2 border-[#565857] bg-[#e7eae7]">
        <div className="flex w-[132px] items-center bg-[#565857] pl-1.5 text-xs text-[#e8e8e8]">
          <svg viewBox="0 0 14 14" className="size-3.5 shrink-0" aria-hidden="true">
            <path d="M2 3l4-2 3 2v3l5 2v3l-5 3-6-2-2-3z" fill="#2f5fd4" />
            <path d="M2 3l4-2 3 2-4 1v4l4-1 5 1-5 2-4-2-3-1z" fill="#8fb4ff" />
          </svg>
          <span className="ml-1.5 leading-4">_model1.prt</span>
          <svg viewBox="0 0 10 12" className="ml-1.5 h-3 w-2.5 shrink-0" fill="none" stroke="#fff" strokeWidth="1.500" aria-hidden="true">
            <path d="M6 1H1v10h7V8M6 1l2 2M4 6h5M7 4l2 2-2 2" />
          </svg>
          <button aria-label="关闭" className="ml-1.5">
            <svg viewBox="0 0 8 8" className="block size-2" stroke="#fff" strokeWidth="2" aria-hidden="true">
              <path d="M0 0l8 8M8 0L0 8" />
            </svg>
          </button>
        </div>
      </div>
      <div className="min-h-0 flex-1 basis-0 bg-[linear-gradient(#afb2b5,#c7cace_28%,#d8dbdf_58%,#e0e4e8_80%,#e1e5e9)]">
        <ModelView />
      </div>
    </main>
  );
}

function StatusBar() {
  return (
    <div className="flex h-[23px] shrink-0 items-center border-t border-b-2 border-t-[#8f9192] border-b-[#30322f] bg-[#d9dad9] text-xs font-bold text-black">
      <span className="w-[46%]">X-Y 旋转视图</span>
      <span className="h-full flex-1 border-l border-[#a5a7a6] pl-[3px] leading-5">绕 X-Y 旋转视图</span>
      <span className="h-full w-5 border-l border-[#a5a7a6]" />
      <span className="h-full w-3.5 border-l border-[#a5a7a6] py-0.5 pl-0.5">
        <span className="block h-full overflow-hidden bg-[#8496a4] leading-4 font-normal text-[#5c6a74]">W</span>
      </span>
    </div>
  );
}

function TaskButton({ label, active, className, children }) {
  return (
    <button
      aria-label={label}
      className={clsx(
        'flex h-full items-center justify-center border-b-2 border-[#a9c57c]',
        active && 'bg-[#33520f]',
        className
      )}
    >
      {children}
    </button>
  );
}

function Taskbar() {
  return (
    <footer className="flex h-10 shrink-0 items-center justify-between overflow-hidden bg-[#171f0e] text-xs text-white">
      <div className="flex h-full">
        <TaskButton label="文件夹" className="mr-[5px] w-[15px] pr-2.5">
          <svg viewBox="0 0 6 18" className="h-[18px] w-1.5 shrink-0" aria-hidden="true">
            <path d="M0 1h5v16H0z" fill="#f6c94e" />
            <path d="M0 10h3l2 2v5H0z" fill="#3b8fd4" />
          </svg>
        </TaskButton>
        <TaskButton label="NX" active className="w-12">
          <svg viewBox="0 0 26 26" className="size-[26px]" aria-hidden="true">
            <circle cx="13" cy="14" r="9" fill="#35b4e0" />
            <path d="M5 18c3 6 12 7 16 0-5 2-11 3-16 0z" fill="#1879c0" />
            <path d="M18 7l4 4-5 7-4-5z" fill="#c5f0ff" />
            <path d="M5 2h8l1 3 4-2-6 11z" fill="#a01830" />
            <path d="M5 2h8l-3 4z" fill="#d8485c" />
            <path d="M22 6c5 2 2 8-6 13-7 4-14 5-15 3 4 0 9-1 14-4 7-4 10-9 7-12z" fill="#e8b25c" />
          </svg>
        </TaskButton>
        <TaskButton label="搜索" className="mx-[5px] w-10">
          <svg viewBox="0 0 24 24" className="size-6" fill="none" aria-hidden="true">
            <path d="M3 5c3-2 12-4 15-1M3 9c-1 6 2 11 9 11" stroke="#1c62b8" strokeWidth="3" />
            <circle cx="12" cy="10" r="6" fill="#154a8c" stroke="#8cc4f4" strokeWidth="2" />
            <path d="M16 14l5 6" stroke="#3a8ce0" strokeWidth="3" />
            <path d="M2 1l3 4M21 1l-3 4M1 22l3-3" stroke="#1c62b8" strokeWidth="2" />
          </svg>
        </TaskButton>
        <TaskButton label="Camtasia" className="ml-1 w-10">
          <svg viewBox="0 0 24 24" className="size-6" aria-hidden="true">
            <circle cx="12" cy="12" r="11" fill="#7fae48" />
            <path d="M3 8C6 2 13 0 18 3 10 3 7 9 8 14c-3 0-5-2-5-6z" fill="#cfe6a8" />
            <path d="M20 5C12 4 9 11 12 17c2 3 5 3 7 3 5-5 4-11 1-15z" fill="#b9e070" stroke="#2f5a12" strokeWidth="1.800" />
            <path d="M17 20h6M20 17v6" stroke="#fff" strokeWidth="1.500" />
          </svg>
        </TaskButton>
      </div>
      <div className="flex items-center gap-2">
        <svg viewBox="0 0 14 8" className="h-2 w-3.5" fill="none" stroke="#eee" strokeWidth="1.300" aria-hidden="true">
          <path d="M1 7l6-6 6 6" />
        </svg>
        <svg viewBox="0 0 16 16" className="ml-0.5 size-4" aria-hidden="true">
          <circle cx="8" cy="8" r="7.500" fill="#2fb84a" />
          <path d="M11 1.500C4 1 1 5 1.500 9c1 3 3 5 6 5.500C4 10 5 3 11 1.500z" fill="#c4f2cc" />
          <path d="M13 3C7 3 6 11 12 13" fill="none" stroke="#0c6b22" strokeWidth="1.500" />
        </svg>
        <svg viewBox="0 0 16 16" className="size-4" fill="none" stroke="#4a5ab8" strokeWidth="2.500" aria-hidden="true">
          <path d="M13 12a6 6 0 1 1 1-4c0 2-1 4-3 5" />
        </svg>
        <svg viewBox="0 0 18 14" className="h-3.5 w-[18px]" fill="none" stroke="#fff" strokeWidth="1.200" aria-hidden="true">
          <path d="M6 3h10v9H6V9M16 6h1.500v3H16M1 2v4h4V2M2 0v2M4 0v2M3 6v3h3" />
          <path d="M8 5h6v5H8z" fill="#fff" />
        </svg>
        <svg viewBox="0 0 14 14" className="size-3.5" fill="none" stroke="#ddd" strokeWidth="1.200" aria-hidden="true">
          <path d="M1 13C1 6 6 1 13 1M4 13c0-5 4-9 9-9M7 13c0-3 3-6 6-6" />
          <circle cx="12" cy="12" r="1.500" fill="#fff" />
        </svg>
        <svg viewBox="0 0 16 14" className="h-3.5 w-4" fill="none" stroke="#fff" strokeWidth="1.200" aria-hidden="true">
          <path d="M1 5h2l4-4v12L3 9H1zM9 5c1 1 1 3 0 4M11 3c2 2 2 6 0 8M13.500 1c3 3 3 9 0 12" />
        </svg>
        <span className="mr-0.5 text-sm leading-5">中</span>
        <div className="w-10 overflow-hidden whitespace-nowrap leading-[18px]">
          <div>下午 05</div>
          <div className="pl-[3px]">2022/6</div>
        </div>
      </div>
    </footer>
  );
}

export default function App() {
  return (
    <div className="flex h-screen flex-col overflow-hidden bg-[#e7eae7] font-['Noto_Sans','Noto_Sans_CJK_SC',sans-serif] select-none">
      <header className="shrink-0 border-t-[3px] border-[#555756] bg-[radial-gradient(ellipse_200px_30px_at_90px_0px,#6a6a68,transparent),radial-gradient(ellipse_220px_16px_at_100%_100%,#777775,transparent)] bg-[#1b1c19]">
        <TitleBar />
        <TabBar />
      </header>
      <div className="shrink-0">
        <Ribbon />
        <SelectionBar />
      </div>
      <div className="flex min-h-0 flex-1">
        <PartNavigator />
        <GraphicsArea />
      </div>
      <StatusBar />
      <Taskbar />
    </div>
  );
}
